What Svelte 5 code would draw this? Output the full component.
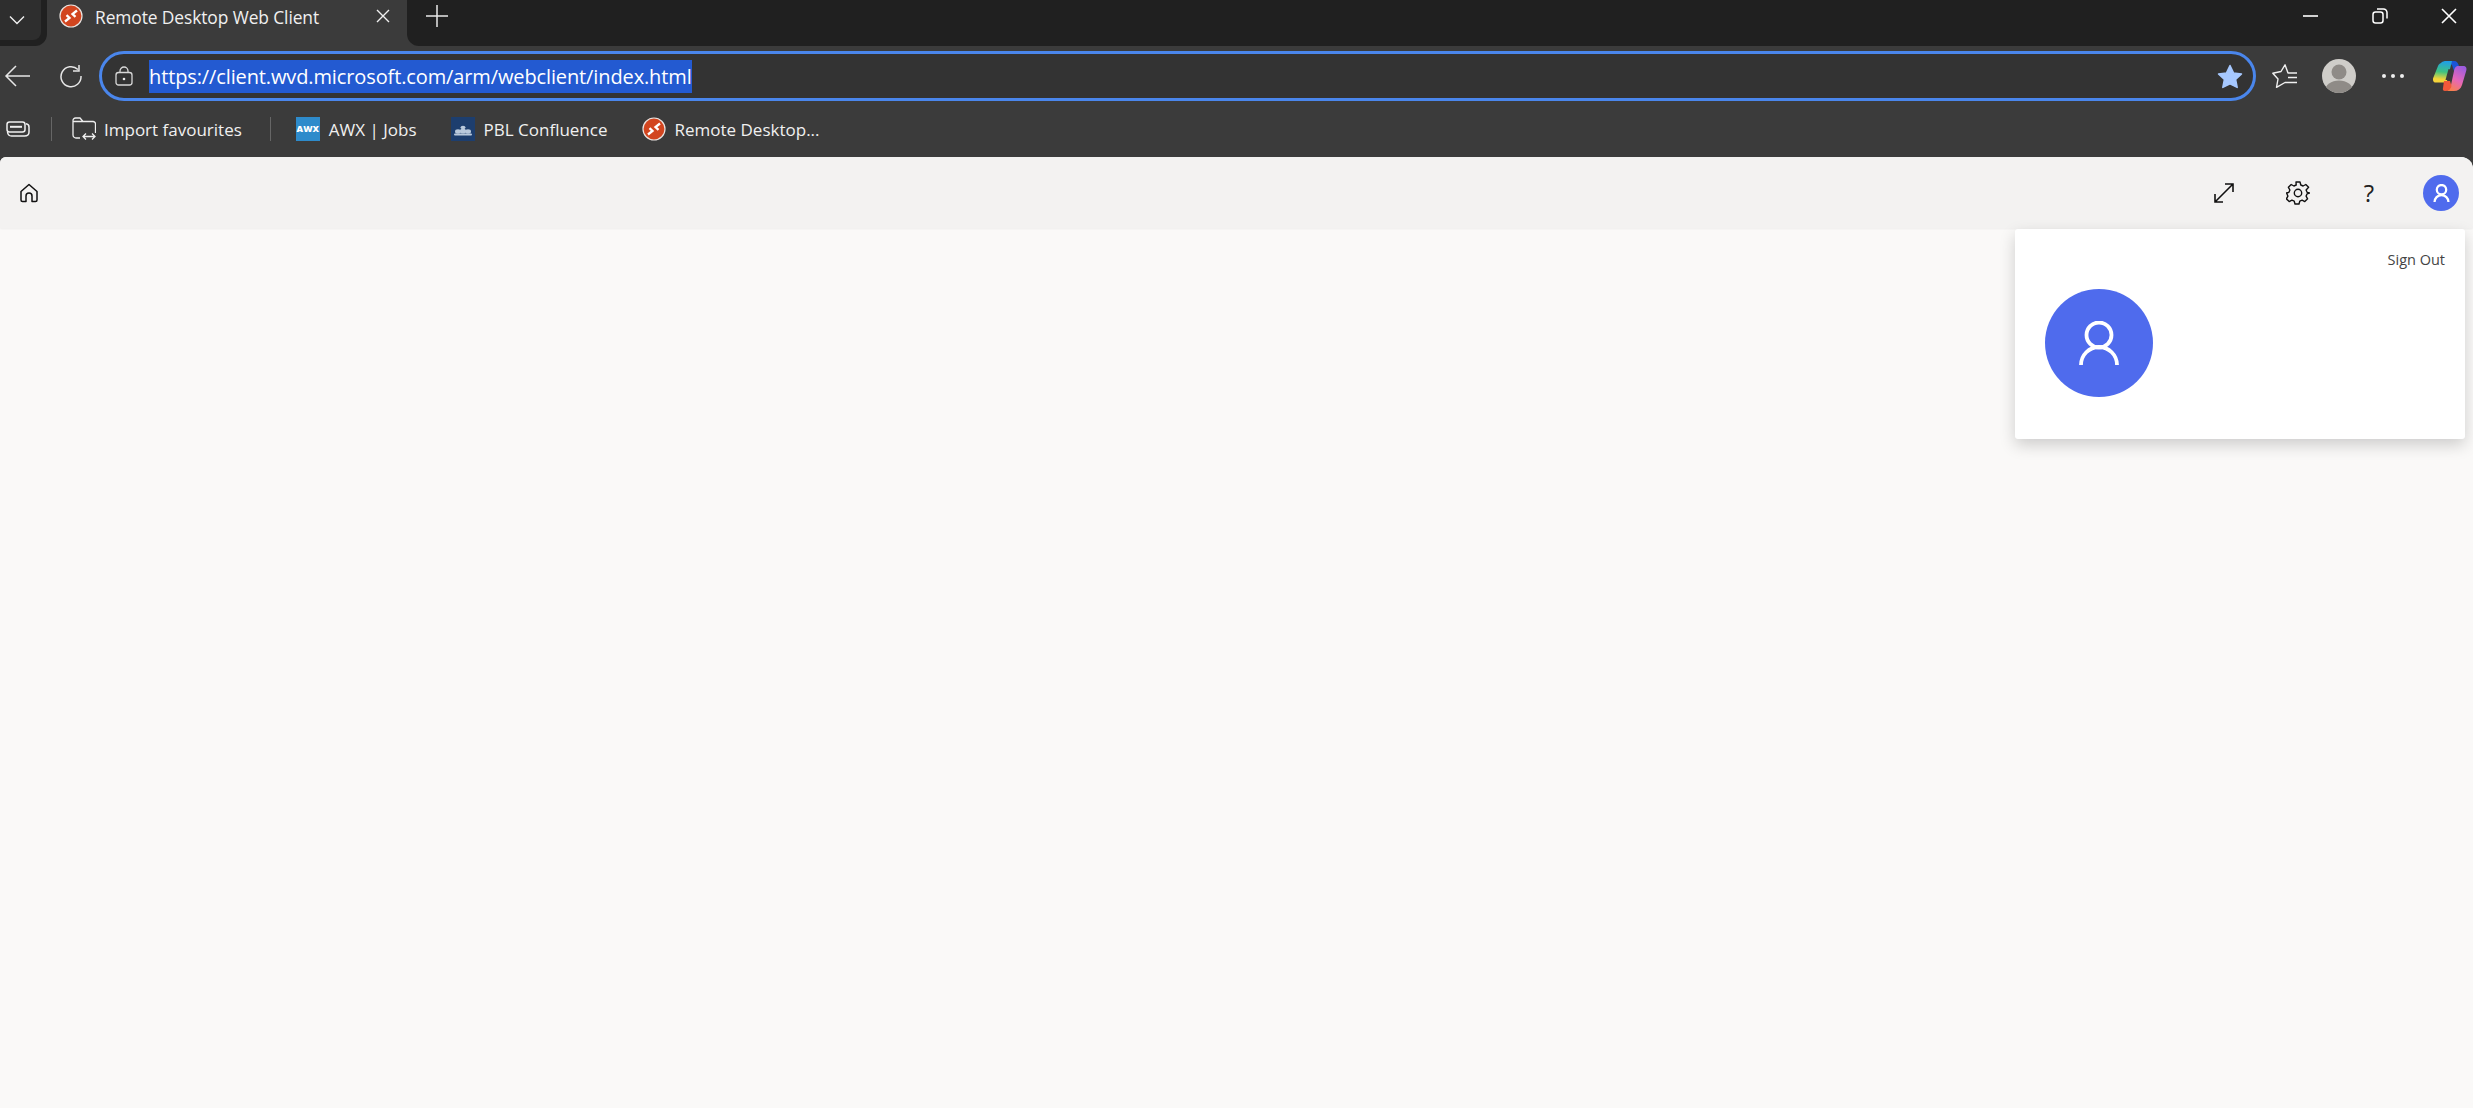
<script>
	const bookmarks = [
		{ label: 'AWX | Jobs', icon: 'awx' },
		{ label: 'PBL Confluence', icon: 'pbl' },
		{ label: 'Remote Desktop...', icon: 'rdp' }
	];
</script>

{#snippet rdpIcon()}
	<svg class="rdp" width="24" height="24" viewBox="0 0 24 24">
		<circle cx="12" cy="12" r="11" fill="#d2451f" stroke="#e9e4e1" stroke-width="1.2" />
		<path d="M18 6.500L13.500 10l3 2.800" stroke="#fff" stroke-width="2.300" fill="none" />
		<path d="M6 17.500l4.500-3.500-3-2.800" stroke="#fff" stroke-width="2.300" fill="none" />
	</svg>
{/snippet}

<div class="browser">
	<div class="tabstrip">
		<div class="strip-left">
			<button class="tab-list" aria-label="Tab actions">
				<svg width="16" height="10" viewBox="0 0 16 10"><path d="M1 1.500l7 7 7-7" fill="none" stroke="#f0f0f0" stroke-width="1.400" /></svg>
			</button>
		</div>
		<div class="tab">
			{@render rdpIcon()}
			<span class="tab-title">Remote Desktop Web Client</span>
			<svg class="tab-close" width="14" height="14" viewBox="0 0 14 14"><path d="M1 1l12 12M13 1L1 13" stroke="#f0f0f0" stroke-width="1.400" /></svg>
		</div>
		<div class="strip-rest">
			<svg class="new-tab" width="22" height="22" viewBox="0 0 22 22"><path d="M11 0v22M0 11h22" stroke="#e8e8e8" stroke-width="1.500" /></svg>
			<div class="win-controls">
				<svg width="16" height="16" viewBox="0 0 16 16"><path d="M0 8h15" stroke="#fff" stroke-width="1.600" /></svg>
				<svg width="16" height="16" viewBox="0 0 16 16"><rect x="1" y="4" width="10" height="11" rx="2.500" fill="none" stroke="#fff" stroke-width="1.500" /><path d="M5 1h6.500a3.500 3.500 0 0 1 3.500 3.500v6" fill="none" stroke="#fff" stroke-width="1.500" /></svg>
				<svg width="16" height="16" viewBox="0 0 16 16"><path d="M1 1l14 14M15 1L1 15" stroke="#fff" stroke-width="1.600" /></svg>
			</div>
		</div>
	</div>

	<div class="toolbar">
		<svg class="back" width="26" height="24" viewBox="0 0 26 24"><path d="M12 2L2 12l10 10M2 12h24" fill="none" stroke="#e6e6e6" stroke-width="1.500" /></svg>
		<svg class="reload" width="24" height="24" viewBox="0 0 24 24"><path d="M19 5.500A10 10 0 1 0 22 12" fill="none" stroke="#e6e6e6" stroke-width="1.500" /><path d="M20 1v6h-6" fill="none" stroke="#e6e6e6" stroke-width="1.500" /></svg>
		<div class="omnibox">
			<svg class="lock" width="18" height="20" viewBox="0 0 18 20"><rect x="1" y="6.500" width="16" height="12.500" rx="2.500" fill="none" stroke="#d8d8d8" stroke-width="1.300" /><path d="M5 6.500V5a4 4 0 0 1 8 0v1.500" fill="none" stroke="#d8d8d8" stroke-width="1.300" /><circle cx="9" cy="13" r="1.300" fill="#e8e8e8" /></svg>
			<span class="url">https://client.wvd.microsoft.com/arm/webclient/index.html</span>
			<svg class="star" width="26" height="25" viewBox="0 0 26 25"><path d="M13 1.500l3.500 7.400 8 1-5.900 5.500 1.600 8L13 19.900l-7.200 3.500 1.600-8L1.500 9.900l8-1z" fill="#a6c8ff" stroke="#a6c8ff" stroke-width="1.500" stroke-linejoin="round" /></svg>
		</div>
		<svg class="fav-list" width="25" height="24" viewBox="0 0 25 24"><path d="M25 9H16L13 .8 9 7.500.8 9.200 6 15l-1.500 8.300 8.500-4.800h12M16 13.500h9" fill="none" stroke="#f0f0f0" stroke-width="1.400" stroke-linejoin="round" /></svg>
		<div class="profile">
			<svg width="34" height="34" viewBox="0 0 34 34"><defs><clipPath id="pf"><circle cx="17" cy="17" r="17" /></clipPath></defs><circle cx="17" cy="17" r="17" fill="#cfcdc9" /><g clip-path="url(#pf)" fill="#8f8b87"><circle cx="17" cy="13" r="7.500" /><ellipse cx="17" cy="32" rx="14" ry="10.500" /></g></svg>
		</div>
		<div class="dots"><i></i><i></i><i></i></div>
		<svg class="copilot" width="34" height="32" viewBox="0 0 34 32">
			<defs>
				<linearGradient id="cpa" x1="0.5" y1="0" x2="0.4" y2="1"><stop offset="0" stop-color="#1f9ee8" /><stop offset="0.5" stop-color="#3fc380" /><stop offset="0.85" stop-color="#f5d43a" /></linearGradient>
				<linearGradient id="cpb" x1="0.8" y1="0" x2="0.3" y2="1"><stop offset="0" stop-color="#9a5ce0" /><stop offset="0.55" stop-color="#e667b8" /><stop offset="1" stop-color="#f9814a" /></linearGradient>
			</defs>
			<path d="M14 1h7c3 0 4 2 5 5l1 5h-6l-2-6z" fill="#1b55d8" />
			<path d="M8 3c1-1.500 3-2 6-2h5l-5 20c-.4 1-1 1.500-2 1.500H3c-2.500 0-3.500-2-2.800-4.500L5 6c.5-1.500 1.500-2.500 3-3z" fill="url(#cpa)" />
			<path d="M25 6h5c3 0 4 2 3.300 4.500L29 25c-1.300 4-4 6-8 6H12c3 0 5-2 5.800-5L21 11c.5-2.500 1.500-5 4-5z" fill="url(#cpb)" />
			<path d="M11 21h6l1.500 5c-.7 3-3 5-6.500 5-2 0-2.500-1.500-2-3z" fill="#f2583a" />
			<path d="M15.500 9l-3 11h3.500l3-10z" fill="#3b3b3b" />
		</svg>
	</div>

	<div class="bookmarks">
		<svg class="wallet" width="24" height="18" viewBox="0 0 24 18"><rect x="1" y="2" width="18" height="10" rx="2.500" fill="none" stroke="#efefef" stroke-width="1.500" /><path d="M4 6.800h12" stroke="#efefef" stroke-width="2" /><path d="M1.500 12c.3 2.500 2 4 4 4h13c3 0 4.500-2 4.500-4V7c0-1.500-1-3-3-3.200" fill="none" stroke="#efefef" stroke-width="1.500" /></svg>
		<span class="sep"></span>
		<div class="bm-import">
			<svg width="24" height="23" viewBox="0 0 24 23"><path d="M8 21H4a3 3 0 0 1-3-3V3.500A2.500 2.500 0 0 1 3.500 1H8l3 3.500h10A2.500 2.500 0 0 1 23.500 7v9M1 4.500h10" fill="none" stroke="#eee" stroke-width="1.300" /><path d="M11 19.500h12M14 16.500l-3 3 3 3M20 16.500l3 3-3 3" fill="none" stroke="#eee" stroke-width="1.300" /></svg>
			<span>Import favourites</span>
		</div>
		<span class="sep sep-b"></span>
		{#each bookmarks as bm}
			<div class="bm">
				{#if bm.icon === 'awx'}
					<span class="awx">AWX</span>
				{:else if bm.icon === 'pbl'}
					<svg width="24" height="24" viewBox="0 0 24 24"><rect width="24" height="24" fill="#1d3e6e" /><g fill="#b9c9dc"><ellipse cx="12" cy="10.500" rx="2.500" ry="1.800" /><ellipse cx="7" cy="14.500" rx="3" ry="2.200" /><ellipse cx="12" cy="14" rx="3" ry="2.600" /><ellipse cx="17" cy="14.500" rx="3" ry="2.200" /><rect x="3" y="16.500" width="18" height="2" rx="1" /></g></svg>
				{:else}
					{@render rdpIcon()}
				{/if}
				<span>{bm.label}</span>
			</div>
		{/each}
	</div>

	<main class="page">
		<header class="app-bar">
			<svg class="home" width="20" height="20" viewBox="0 0 20 20"><path d="M7 18.500H3.500A1.500 1.500 0 0 1 2 17V8.500L10 1.500l8 7V17a1.500 1.500 0 0 1-1.500 1.500H13V13a3 3 0 0 0-6 0z" fill="none" stroke="#111" stroke-width="1.500" stroke-linejoin="round" /></svg>
			<div class="bar-actions">
				<svg class="bar-icon" width="20" height="20" viewBox="0 0 20 20"><path d="M1 19L19 1M11 1h8v8M1 11v8h8" fill="none" stroke="#111" stroke-width="1.600" /></svg>
				<svg class="bar-icon" width="24" height="24" viewBox="0 0 24 24"><path d="M10 1h4l.8 3 2.300 1 2.700-1.500 2.800 2.800L20.100 9l1 2.300 2.400.7v0l-2.400.8-1 2.300 1.500 2.700-2.800 2.800-2.700-1.500-2.300 1-.8 2.900h-4l-.8-2.900-2.300-1-2.700 1.500-2.800-2.800 1.500-2.700-1-2.300L.5 12l2.400-.7 1-2.300-1.500-2.700 2.800-2.800 2.700 1.500 2.300-1z" fill="none" stroke="#111" stroke-width="1.400" stroke-linejoin="round" /><circle cx="12" cy="12" r="3.700" fill="none" stroke="#111" stroke-width="1.400" /></svg>
				<span class="help">?</span>
				<button class="avatar-sm" aria-label="Account">
					<svg width="17" height="18" viewBox="0 0 40 44"><circle cx="20" cy="14" r="11.500" fill="none" stroke="#fff" stroke-width="5.500" /><path d="M3 44a17 17 0 0 1 34 0" fill="none" stroke="#fff" stroke-width="5.500" /></svg>
				</button>
			</div>
		</header>
		<section class="content">
			<div class="flyout">
				<div class="sign-row"><span>Sign Out</span></div>
				<div class="avatar-lg">
					<svg width="40" height="44" viewBox="0 0 40 44"><circle cx="20" cy="14" r="12.500" fill="none" stroke="#fff" stroke-width="3.800" /><path d="M2 44a18 18 0 0 1 36 0" fill="none" stroke="#fff" stroke-width="3.800" /></svg>
				</div>
			</div>
		</section>
	</main>
</div>

<style>
	:global(body) {
		margin: 0;
		background: #3b3b3b;
	}

	.browser {
		height: 1108px;
		display: flex;
		flex-direction: column;
		font-family: 'Open Sans', 'Noto Sans', sans-serif;
		color: #f0f0f0;
		overflow: hidden;
	}

	.tabstrip {
		height: 46px;
		display: flex;
		background: #3b3b3b;
	}

	.strip-left {
		width: 47px;
		background: #202020;
		border-bottom-right-radius: 12px;
	}

	.tab-list {
		display: flex;
		align-items: center;
		justify-content: center;
		width: 41px;
		height: 40px;
		padding: 0 7px 0 0;
		border: 0;
		background: #2e2e2e;
		border-bottom-right-radius: 8px;
	}

	.tab {
		width: 360px;
		display: flex;
		align-items: center;
		padding: 0 17px 14px 12px;
		box-sizing: border-box;
	}

	.tab-title {
		margin-left: 12px;
		padding-top: 2px;
		font-size: 17.400px;
		letter-spacing: -0.1px;
		flex: 1;
		white-space: nowrap;
	}

	.strip-rest {
		flex: 1;
		display: flex;
		align-items: flex-start;
		background: #202020;
		border-bottom-left-radius: 12px;
	}

	.new-tab {
		margin: 5px 0 0 19px;
	}

	.win-controls {
		margin-left: auto;
		margin-right: 16px;
		margin-top: 8px;
		display: flex;
		gap: 53px;
	}

	.toolbar {
		height: 54px;
		display: flex;
		align-items: center;
		padding: 6px 6px 0 4px;
		box-sizing: border-box;
	}

	.back {
		flex: none;
	}

	.reload {
		margin-left: 29px;
		flex: none;
	}

	.omnibox {
		margin-left: 16px;
		width: 2157px;
		height: 50px;
		box-sizing: border-box;
		border: 3px solid #4a86ec;
		border-radius: 25px;
		background: #333333;
		display: flex;
		align-items: center;
		padding: 0 10px 0 13px;
		flex: none;
	}

	.lock {
		margin-right: 16px;
	}

	.url {
		background: #235ad1;
		color: #fff;
		font-size: 20px;
		letter-spacing: -0.12px;
		line-height: 33px;
		white-space: nowrap;
	}

	.star {
		margin-left: auto;
	}

	.fav-list {
		margin-left: 16px;
		flex: none;
	}

	.profile {
		margin-left: 25px;
		height: 34px;
	}

	.dots {
		margin-left: 26px;
		display: flex;
		gap: 5px;
	}

	.dots i {
		width: 4px;
		height: 4px;
		border-radius: 50%;
		background: #eee;
	}

	.copilot {
		margin-left: 29px;
		flex: none;
	}

	.bookmarks {
		height: 57px;
		display: flex;
		align-items: center;
		font-size: 17px;
		padding-left: 6px;
	}

	.bookmarks span:not(.sep):not(.awx) {
		position: relative;
		top: 1px;
	}

	.wallet {
		flex: none;
	}

	.sep {
		width: 1px;
		height: 24px;
		background: #666;
		margin-left: 21px;
	}

	.sep-b {
		margin-left: 28px;
		margin-right: 25px;
	}

	.bm-import {
		display: flex;
		align-items: center;
		gap: 8px;
		margin-left: 20px;
	}

	.bm {
		display: flex;
		align-items: center;
		gap: 9px;
		margin-right: 34px;
	}

	.awx {
		width: 24px;
		height: 24px;
		background: #2e8bcb;
		color: #fff;
		font-size: 9px;
		font-weight: 800;
		line-height: 24px;
		text-align: center;
		overflow: hidden;
	}

	.page {
		flex: 1;
		display: flex;
		flex-direction: column;
		background: #faf9f8;
		border-radius: 6px 12px 0 0;
		overflow: hidden;
	}

	.app-bar {
		height: 71px;
		flex: none;
		background: #f3f2f1;
		display: flex;
		align-items: center;
		padding: 0 14px 0 19px;
		box-shadow: 0 1px 2px rgba(0, 0, 0, 0.05);
	}

	.bar-actions {
		margin-left: auto;
		display: flex;
		align-items: center;
	}

	.bar-icon {
		flex: none;
	}

	.bar-icon + .bar-icon {
		margin-left: 52px;
	}

	.help {
		margin-left: 51px;
		width: 16px;
		text-align: center;
		color: #222;
		font-size: 24px;
	}

	.avatar-sm {
		margin-left: 46px;
		width: 36px;
		height: 36px;
		padding: 0;
		border: 0;
		border-radius: 50%;
		background: #4f6bed;
		display: flex;
		align-items: center;
		justify-content: center;
	}

	.content {
		flex: 1;
		position: relative;
	}

	.flyout {
		position: absolute;
		top: 1px;
		right: 8px;
		width: 450px;
		height: 210px;
		box-sizing: border-box;
		padding: 21px 20px 0 30px;
		background: #fff;
		border-radius: 3px;
		box-shadow: 0 6px 16px rgba(0, 0, 0, 0.18);
	}

	.sign-row {
		display: flex;
		justify-content: flex-end;
		color: #444;
		font-size: 14.500px;
		line-height: 20px;
	}

	.avatar-lg {
		margin-top: 19px;
		width: 108px;
		height: 108px;
		border-radius: 50%;
		background: #4f6bed;
		display: flex;
		align-items: center;
		justify-content: center;
	}
</style>
